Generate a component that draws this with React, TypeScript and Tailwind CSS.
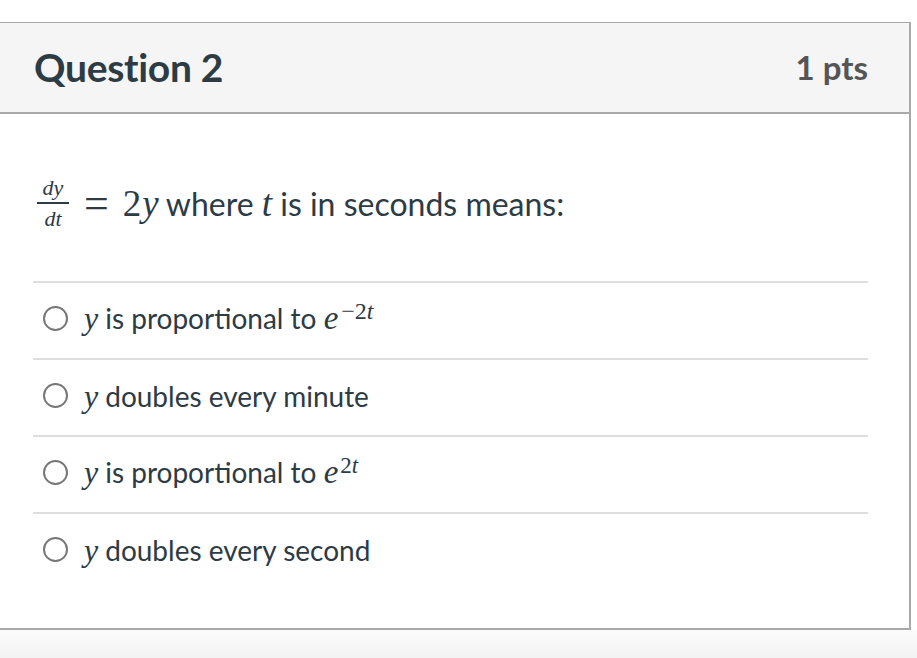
const lato = { fontFamily: "Lato, 'Liberation Sans', sans-serif" };

function M({ children, className = "" }: { children: React.ReactNode; className?: string }) {
  return (
    <span className={`italic font-['Liberation_Serif',serif] ${className}`}>{children}</span>
  );
}

const answers: React.ReactNode[] = [
  <>
    <M className="mr-[7px] text-[32px]">y</M>is proportional to <M className="text-[33px]">e</M>
    <sup className="relative -top-[10px] ml-[3px] font-['Liberation_Serif',serif] text-[24px]">
      −2<span className="italic">t</span>
    </sup>
  </>,
  <>
    <M className="mr-[7px] text-[32px]">y</M>doubles every minute
  </>,
  <>
    <M className="mr-[7px] text-[32px]">y</M>is proportional to <M className="text-[33px]">e</M>
    <sup className="relative -top-[10px] ml-[2px] font-['Liberation_Serif',serif] text-[23px]">
      2<span className="italic">t</span>
    </sup>
  </>,
  <>
    <M className="mr-[7px] text-[32px]">y</M>doubles every second
  </>,
];

export default function App() {
  return (
    <div className="flex min-h-[658px] w-[917px] flex-col bg-white text-[#2d3b45]" style={lato}>
      <div className="h-[22px]" />
      <div className="w-[911px] border-t border-r-2 border-b-2 border-[#a9a9a9] bg-white">
        {/* en-tête */}
        <div className="flex h-[91px] items-center justify-between border-b-2 border-[#a9a9a9] bg-[#f5f5f5] pl-[34px] pr-[41px]">
          <h2 className="text-[39px] font-bold tracking-[-0.3px]">Question 2</h2>
          <span className="text-[33px] font-bold text-[#555]">1 pts</span>
        </div>

        {/* énoncé */}
        <div className="pl-[33px] pr-[41px] pb-[39px]">
          <div className="flex h-[167px] items-center pl-[4px] pt-[12px]">
            <span className="inline-flex flex-col items-center font-['Liberation_Serif',serif] text-[22px] italic leading-none">
              <span className="px-[2px] pb-[3px]">dy</span>
              <span className="h-[2px] w-[32px] bg-[#2d3b45]" />
              <span className="px-[2px] pt-[4px]">dt</span>
            </span>
            <span className="ml-[15px] font-['Liberation_Serif',serif] text-[44px] leading-none">=</span>
            <span className="ml-[14px] font-['Liberation_Serif',serif] text-[37px] tracking-[1px]">
              2<span className="italic">y</span>
            </span>
            <span className="ml-[6px] text-[32px]">
              where <M className="text-[37px]">t</M> is in seconds means:
            </span>
          </div>

          {answers.map((a, i) => (
            <div key={i} className="flex h-[77px] items-center border-t-2 border-[#dedede] pb-[4px] pl-[10px]">
              <span className="h-[25px] w-[25px] shrink-0 rounded-full border-2 border-[#777]" />
              <span className="ml-[16px] text-[28px] leading-none">{a}</span>
            </div>
          ))}
        </div>
      </div>
      <div className="flex-1 bg-gradient-to-b from-[#fbfbfb] to-[#f3f3f3]" />
    </div>
  );
}
